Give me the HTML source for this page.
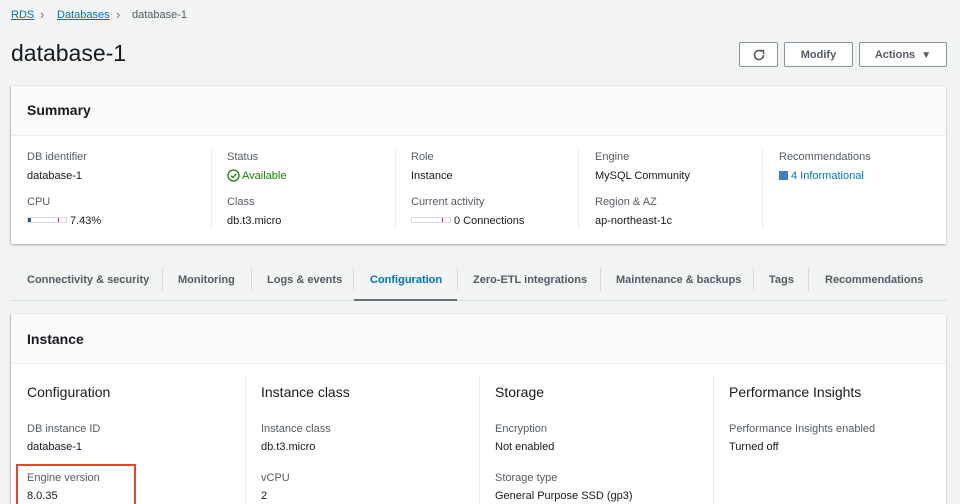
<!DOCTYPE html>
<html><head><meta charset="utf-8"><style>
*{margin:0;padding:0;box-sizing:border-box}
html{width:960px;height:504px;overflow:hidden}
body{width:960px;height:504px;overflow:hidden;background:#f2f3f3;font-family:"Liberation Sans",sans-serif;color:#16191f;position:relative}
.a{position:absolute;white-space:nowrap}
.lbl{font-size:11px;color:#545b64}
.val{font-size:11px;color:#16191f}
.card{position:absolute;background:#fff;box-shadow:0 1px 2px rgba(0,28,36,.3),-1px 0 1px rgba(0,28,36,.15)}
.hd{position:absolute;left:0;right:0;top:0;background:#fafafa;border-bottom:1px solid #eaeded}
.vl{position:absolute;width:1px;background:#eaeded}
.btn{position:absolute;top:42px;height:25px;border:1px solid #879596;background:#fff;border-radius:2px;font-size:11px;font-weight:bold;color:#545b64;text-align:center;line-height:25px}
.tab{position:absolute;top:274px;font-size:11px;font-weight:bold;color:#545b64}
.ts{position:absolute;top:268px;width:1px;height:23px;background:#d5dbdb}
.bar{position:absolute;height:6px;border:1px solid #d5dbdb;background:#fff}
</style></head><body>
<div class="a" style="left:11px;top:9px;font-size:11px;color:#0073bb;text-decoration:underline">RDS</div>
<div class="a" style="left:40px;top:7px;font-size:13px;color:#687078">&#x203A;</div>
<div class="a" style="left:57px;top:9px;font-size:11px;color:#0073bb;text-decoration:underline">Databases</div>
<div class="a" style="left:116px;top:7px;font-size:13px;color:#687078">&#x203A;</div>
<div class="a" style="left:132px;top:9px;font-size:11px;color:#545b64">database-1</div>
<div class="a" style="left:11px;top:40px;font-size:23px;color:#16191f">database-1</div>

<div class="btn" style="left:739px;width:39px"><svg width="14" height="14" viewBox="0 0 14 14" style="margin-top:5px"><path d="M11.5 7A4.5 4.5 0 1 1 9.8 3.5" fill="none" stroke="#545b64" stroke-width="1.6"/><path d="M8 2.5h3.5V6" fill="none" stroke="#545b64" stroke-width="1.6"/></svg></div>
<div class="btn" style="left:784px;width:69px">Modify</div>
<div class="btn" style="left:859px;width:88px">Actions &nbsp;<span style="font-size:10px;color:#545b64">&#9660;</span></div>

<div class="card" style="left:11px;top:86px;width:935px;height:158px">
<div class="hd" style="height:50px"></div>
<div class="a" style="left:16px;top:16px;font-size:14px;font-weight:bold">Summary</div>
<div class="vl" style="left:200px;top:62px;height:81px"></div>
<div class="vl" style="left:384px;top:62px;height:81px"></div>
<div class="vl" style="left:567px;top:62px;height:81px"></div>
<div class="vl" style="left:751px;top:62px;height:81px"></div>
</div>
<div class="a lbl" style="left:27px;top:151px">DB identifier</div>
<div class="a val" style="left:27px;top:170px">database-1</div>
<div class="a lbl" style="left:27px;top:196px">CPU</div>
<div class="bar" style="left:27px;top:217px;width:40px"></div>
<div style="position:absolute;left:28px;top:218px;width:3px;height:4px;background:#2e5a88"></div>
<div style="position:absolute;left:58px;top:218px;width:1px;height:4px;background:#d13212"></div>
<div class="a val" style="left:70px;top:215px">7.43%</div>
<div class="a lbl" style="left:227px;top:151px">Status</div>
<svg class="a" style="left:227px;top:169px" width="13" height="13" viewBox="0 0 13 13"><circle cx="6.5" cy="6.5" r="5.5" fill="none" stroke="#1d8102" stroke-width="1.3"/><path d="M4 6.7l1.8 1.8L9.2 5" fill="none" stroke="#1d8102" stroke-width="1.3"/></svg>
<div class="a" style="left:242px;top:170px;font-size:11px;color:#1d8102">Available</div>
<div class="a lbl" style="left:227px;top:196px">Class</div>
<div class="a val" style="left:227px;top:215px">db.t3.micro</div>
<div class="a lbl" style="left:411px;top:151px">Role</div>
<div class="a val" style="left:411px;top:170px">Instance</div>
<div class="a lbl" style="left:411px;top:196px">Current activity</div>
<div class="bar" style="left:411px;top:217px;width:40px"></div>
<div style="position:absolute;left:442px;top:218px;width:1px;height:4px;background:#d13212"></div>
<div class="a val" style="left:454px;top:215px">0 Connections</div>
<div class="a lbl" style="left:595px;top:151px">Engine</div>
<div class="a val" style="left:595px;top:170px">MySQL Community</div>
<div class="a lbl" style="left:595px;top:196px">Region &amp; AZ</div>
<div class="a val" style="left:595px;top:215px">ap-northeast-1c</div>
<div class="a lbl" style="left:779px;top:151px">Recommendations</div>
<div style="position:absolute;left:779px;top:171px;width:9px;height:9px;background:#3f7fc1"></div>
<div class="a" style="left:791px;top:170px;font-size:11px;color:#0073bb">4 Informational</div>

<div class="tab" style="left:27px">Connectivity &amp; security</div>
<div class="ts" style="left:162px"></div>
<div class="tab" style="left:178px">Monitoring</div>
<div class="ts" style="left:251px"></div>
<div class="tab" style="left:267px">Logs &amp; events</div>
<div class="ts" style="left:353px"></div>
<div class="tab" style="left:370px;color:#0073bb">Configuration</div>
<div class="ts" style="left:457px"></div>
<div class="tab" style="left:473px">Zero-ETL integrations</div>
<div class="ts" style="left:600px"></div>
<div class="tab" style="left:616px">Maintenance &amp; backups</div>
<div class="ts" style="left:753px"></div>
<div class="tab" style="left:769px">Tags</div>
<div class="ts" style="left:808px"></div>
<div class="tab" style="left:825px">Recommendations</div>
<div style="position:absolute;left:11px;top:300px;width:935px;height:1px;background:#d5dbdb"></div>
<div style="position:absolute;left:354px;top:299px;width:103px;height:2px;background:#687078"></div>

<div class="card" style="left:11px;top:314px;width:935px;height:190px">
<div class="hd" style="height:50px"></div>
<div class="a" style="left:16px;top:17px;font-size:14px;font-weight:bold">Instance</div>
<div class="vl" style="left:234px;top:62px;height:128px"></div>
<div class="vl" style="left:468px;top:62px;height:128px"></div>
<div class="vl" style="left:702px;top:62px;height:128px"></div>
</div>
<div class="a" style="left:27px;top:384px;font-size:14px">Configuration</div>
<div class="a lbl" style="left:27px;top:423px">DB instance ID</div>
<div class="a val" style="left:27px;top:441px">database-1</div>
<div class="a lbl" style="left:27px;top:472px">Engine version</div>
<div class="a val" style="left:27px;top:490px">8.0.35</div>
<div style="position:absolute;left:16px;top:464px;width:120px;height:40px;border:2px solid #e8432b;border-bottom:none"></div>
<div class="a" style="left:261px;top:384px;font-size:14px">Instance class</div>
<div class="a lbl" style="left:261px;top:423px">Instance class</div>
<div class="a val" style="left:261px;top:441px">db.t3.micro</div>
<div class="a lbl" style="left:261px;top:472px">vCPU</div>
<div class="a val" style="left:261px;top:490px">2</div>
<div class="a" style="left:495px;top:384px;font-size:14px">Storage</div>
<div class="a lbl" style="left:495px;top:423px">Encryption</div>
<div class="a val" style="left:495px;top:441px">Not enabled</div>
<div class="a lbl" style="left:495px;top:472px">Storage type</div>
<div class="a val" style="left:495px;top:490px">General Purpose SSD (gp3)</div>
<div class="a" style="left:729px;top:384px;font-size:14px">Performance Insights</div>
<div class="a lbl" style="left:729px;top:423px">Performance Insights enabled</div>
<div class="a val" style="left:729px;top:441px">Turned off</div>
</body></html>
